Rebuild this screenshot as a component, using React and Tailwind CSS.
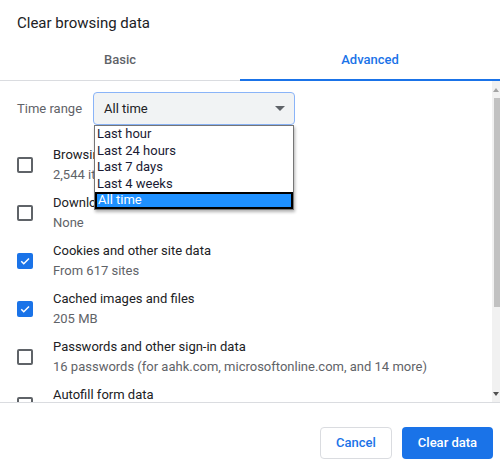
import React from "react";

const Check = ({ checked }) =>
  checked ? (
    <div className="w-[16px] h-[16px] rounded-[2px] bg-[#1a73e8] flex items-center justify-center shrink-0">
      <svg width="12" height="12" viewBox="0 0 24 24">
        <path d="M4.5 12.5l5 5L20 7" fill="none" stroke="white" strokeWidth="3" />
      </svg>
    </div>
  ) : (
    <div className="w-[16px] h-[16px] rounded-[2px] border-2 border-[#5f6368] shrink-0" />
  );

const rows = [
  ["Browsing history", "2,544 items", false],
  ["Download history", "None", false],
  ["Cookies and other site data", "From 617 sites", true],
  ["Cached images and files", "205 MB", true],
  ["Passwords and other sign-in data", "16 passwords (for aahk.com, microsoftonline.com, and 14 more)", false],
  ["Autofill form data", "", false],
];

export default function App() {
  return (
    <div className="w-[500px] h-[468px] bg-white flex flex-col overflow-hidden font-['Roboto',sans-serif]">
      <div className="h-[40px] flex items-end pl-[17px] pb-[6px] text-[15px] text-[#202124]">
        Clear browsing data
      </div>
      <div className="h-[41px] flex border-b border-[#dadce0]">
        <div className="w-[240px] flex items-center justify-center text-[13px] font-medium text-[#5f6368]">Basic</div>
        <div className="flex-1 flex items-center justify-center text-[13px] font-medium text-[#1a73e8] border-b-2 border-[#1a73e8] mb-[-1px]">
          Advanced
        </div>
      </div>
      <div className="h-[322px] flex border-b border-[#dadce0] overflow-hidden">
        <div className="flex-1 relative overflow-hidden">
          <div className="flex items-center pt-[11px] pl-[17px]">
            <span className="text-[13px] text-[#5f6368] w-[76px]">Time range</span>
            <div className="w-[202px] h-[33px] rounded-[4px] bg-[#f1f3f4] border border-[#8ab4f8] flex items-center justify-between pl-[10px] pr-[9px] text-[13px] text-[#202124]">
              <span>All time</span>
              <svg width="10" height="5" viewBox="0 0 10 5"><path d="M0 0h10L5 5z" fill="#5f6368" /></svg>
            </div>
          </div>
          <div className="mt-[16px] flex flex-col">
            {rows.map(([a, b, c]) => (
              <div key={a} className="h-[48px] shrink-0 flex items-center">
                <div className="w-[53px] pl-[17px] flex items-center">
                  <Check checked={c} />
                </div>
                <div className="flex flex-col text-[13px] leading-[20px]">
                  <span className="text-[#202124] h-[20px]">{a}</span>
                  <span className="text-[#5f6368] h-[20px]">{b}</span>
                </div>
              </div>
            ))}
          </div>
          <div className="absolute left-[94px] top-[44px] w-[200px] bg-white border border-[#767676] shadow-[1px_2px_3px_rgba(0,0,0,0.3)] flex flex-col text-[13px] leading-[16.5px] text-[#1a1a33]">
            <div className="pl-[2px]">Last hour</div>
            <div className="pl-[2px]">Last 24 hours</div>
            <div className="pl-[2px]">Last 7 days</div>
            <div className="pl-[2px]">Last 4 weeks</div>
            <div className="pl-[1px] bg-[#1e90ff] text-white border-2 border-black leading-[12.5px]">All time</div>
          </div>
        </div>
        <div className="w-[8px] bg-[#f1f1f1] flex flex-col items-end">
          <div className="h-[17px] w-full flex items-center justify-center">
            <svg width="6" height="4" viewBox="0 0 6 4"><path d="M0 4L3 0l3 4z" fill="#a3a3a3" /></svg>
          </div>
          <div className="w-[6px] h-[209px] bg-[#c1c1c1]" />
          <div className="flex-1" />
          <div className="h-[17px] w-full flex items-center justify-center">
            <svg width="6" height="4" viewBox="0 0 6 4"><path d="M0 0h6L3 4z" fill="#505050" /></svg>
          </div>
        </div>
      </div>
      <div className="flex-1 flex justify-end items-start pt-[24px] pr-[7px] gap-[10px]">
        <button className="w-[72px] h-[32px] rounded-[4px] border border-[#dadce0] bg-white text-[13px] font-medium text-[#1a73e8]">Cancel</button>
        <button className="w-[91px] h-[32px] rounded-[4px] bg-[#1a73e8] text-[13px] font-medium text-white">Clear data</button>
      </div>
    </div>
  );
}
